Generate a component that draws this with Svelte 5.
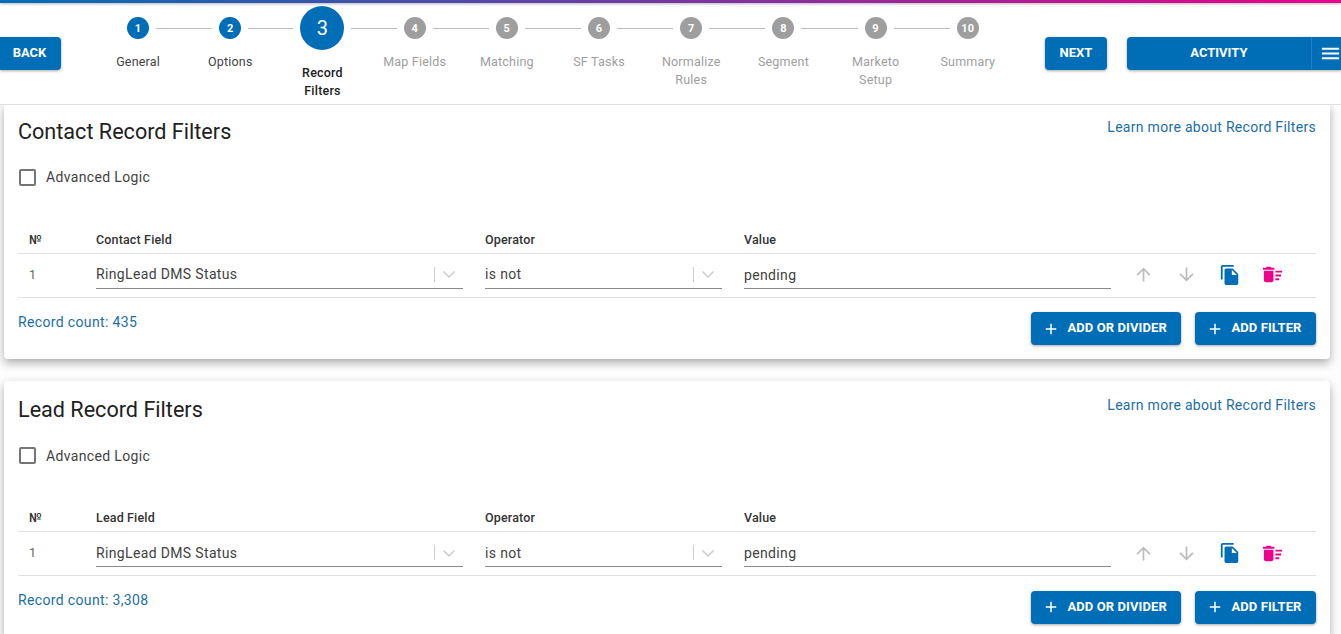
<script>
  const steps = [
    { n: 1, label: 'General', done: true },
    { n: 2, label: 'Options', done: true },
    { n: 3, label: 'Record Filters', current: true },
    { n: 4, label: 'Map Fields' },
    { n: 5, label: 'Matching' },
    { n: 6, label: 'SF Tasks' },
    { n: 7, label: 'Normalize Rules' },
    { n: 8, label: 'Segment' },
    { n: 9, label: 'Marketo Setup' },
    { n: 10, label: 'Summary' }
  ];

  const cards = [
    { title: 'Contact Record Filters', field: 'Contact Field', count: '435' },
    { title: 'Lead Record Filters', field: 'Lead Field', count: '3,308' }
  ];
</script>

<div class="page">
  <header class="topbar">
    <div class="gradient"></div>
    <div class="bar">
      <button class="btn back">BACK</button>
      <ol class="stepper">
        {#each steps as step, i}
          <li class="step" class:active={step.done || step.current} class:current={step.current}>
            <div class="track">
              <span class="line" class:hide={i === 0}></span>
              <span class="dot">{step.n}</span>
              <span class="line" class:hide={i === steps.length - 1}></span>
            </div>
            <div class="label">{step.label}</div>
          </li>
        {/each}
      </ol>
      <button class="btn next">NEXT</button>
      <div class="btn activity">
        <span class="activity-label">ACTIVITY</span>
        <span class="menu">
          <svg viewBox="0 0 24 24" width="23" height="23"><path d="M3 18h18v-2H3v2zm0-5h18v-2H3v2zm0-7v2h18V6H3z" /></svg>
        </span>
      </div>
    </div>
  </header>

  <main class="content">
    {#each cards as card}
      <section class="card">
        <div class="card-head">
          <h2>{card.title}</h2>
          <span class="link">Learn more about Record Filters</span>
        </div>
        <label class="check">
          <span class="box"></span>
          <span>Advanced Logic</span>
        </label>

        <div class="row head">
          <div class="num">№</div>
          <div>{card.field}</div>
          <div>Operator</div>
          <div>Value</div>
          <div></div>
        </div>
        <div class="row body">
          <div class="num">1</div>
          <div class="select">
            <span class="val">RingLead DMS Status</span>
            <span class="sep"></span>
            <svg class="chev" viewBox="0 0 20 20" width="20" height="20"><path d="M4.5 7.5 10 13l5.5-5.5" fill="none" stroke="#ccc" stroke-width="1.5" /></svg>
          </div>
          <div class="select">
            <span class="val">is not</span>
            <span class="sep"></span>
            <svg class="chev" viewBox="0 0 20 20" width="20" height="20"><path d="M4.5 7.5 10 13l5.5-5.5" fill="none" stroke="#ccc" stroke-width="1.5" /></svg>
          </div>
          <div class="select input"><span class="val">pending</span></div>
          <div class="actions">
            <svg viewBox="0 0 24 24" width="21" height="21" fill="#bdbdbd"><path d="M4 12l1.41 1.41L11 7.83V20h2V7.83l5.58 5.59L20 12l-8-8-8 8z" /></svg>
            <svg viewBox="0 0 24 24" width="21" height="21" fill="#bdbdbd"><path d="M20 12l-1.41-1.41L13 16.17V4h-2v12.17l-5.58-5.59L4 12l8 8 8-8z" /></svg>
            <svg viewBox="0 0 24 24" width="22" height="22" fill="#006eb7"><path d="M16 1H4c-1.1 0-2 .9-2 2v14h2V3h12V1zm-1 4l6 6v10c0 1.1-.9 2-2 2H7.99C6.89 23 6 22.1 6 21l.01-14c0-1.1.89-2 1.99-2h7zm-1 7h5.5L14 6.5V12z" /></svg>
            <svg viewBox="0 0 24 24" width="23" height="23" fill="#ec008c"><path d="M15 16h4v2h-4zm0-8h7v2h-7zm0 4h6v2h-6zM3 18c0 1.1.9 2 2 2h6c1.1 0 2-.9 2-2V8H3v10zM14 5h-3l-1-1H6L5 5H2v2h12z" /></svg>
          </div>
        </div>

        <div class="card-foot">
          <span class="link count">Record count: {card.count}</span>
          <div class="foot-btns">
            <button class="btn add">
              <svg viewBox="0 0 24 24" width="18" height="18" fill="#fff"><path d="M19 13h-6v6h-2v-6H5v-2h6V5h2v6h6v2z" /></svg>
              ADD OR DIVIDER
            </button>
            <button class="btn add">
              <svg viewBox="0 0 24 24" width="18" height="18" fill="#fff"><path d="M19 13h-6v6h-2v-6H5v-2h6V5h2v6h6v2z" /></svg>
              ADD FILTER
            </button>
          </div>
        </div>
      </section>
    {/each}
  </main>
</div>

<style>
  :global(body) {
    margin: 0;
    overflow: hidden;
    background: #fdfdfd;
    font-family: Roboto, 'Liberation Sans', sans-serif;
  }

  .page {
    height: 634px;
    overflow: hidden;
  }

  .topbar {
    position: relative;
    z-index: 2;
    height: 105px;
    box-sizing: border-box;
    background: #fff;
    border-bottom: 1px solid #dedede;
  }

  .gradient {
    height: 3px;
    background: linear-gradient(90deg, #006eb7, #ec008c);
    box-shadow: 0 1px 3px rgba(0, 0, 0, 0.3);
  }

  .bar {
    display: flex;
    align-items: flex-start;
  }

  .btn {
    box-sizing: border-box;
    border: 0;
    border-radius: 4px;
    background: #006eb7;
    color: #fff;
    font-family: Roboto, sans-serif;
    font-size: 13px;
    font-weight: 700;
    box-shadow: 0 1px 3px rgba(0, 0, 0, 0.35);
    padding: 0 0 2px;
  }

  .back {
    width: 61px;
    height: 33px;
    margin-top: 34px;
    border-radius: 0 4px 4px 0;
    padding-right: 2px;
  }

  .stepper {
    display: flex;
    list-style: none;
    margin: 3px 0 0 31px;
    padding: 0;
  }

  .step {
    width: 92.2px;
    color: #9e9e9e;
    font-size: 12.5px;
    letter-spacing: 0.2px;
  }

  .track {
    display: flex;
    align-items: center;
    height: 44px;
  }

  .line {
    flex: 1;
    height: 1px;
    background: #bdbdbd;
  }

  .line.hide {
    visibility: hidden;
  }

  .dot {
    flex: none;
    width: 22px;
    height: 22px;
    margin: 0 7px;
    border-radius: 50%;
    background: #9e9e9e;
    color: #fff;
    font-size: 11px;
    font-weight: 700;
    display: flex;
    align-items: center;
    justify-content: center;
  }

  .step.active .dot {
    background: #006eb7;
  }

  .step.active {
    color: #424242;
  }

  .step.current {
    color: #212121;
    font-weight: 500;
  }

  .step.current .dot {
    width: 44px;
    height: 44px;
    font-size: 20px;
    font-weight: 400;
  }

  .label {
    margin: 3px auto 0;
    padding: 0 14px;
    line-height: 18px;
    text-align: center;
  }

  .step.current .label {
    margin-top: 14px;
  }

  .next {
    width: 62px;
    height: 33px;
    margin: 34px 0 0 31px;
  }

  .activity {
    display: flex;
    align-items: center;
    width: 214px;
    height: 33px;
    margin: 34px 0 0 20px;
    border-radius: 4px 0 0 4px;
    padding: 0;
  }

  .activity-label {
    flex: 1;
    text-align: center;
    padding-bottom: 2px;
  }

  .menu {
    flex: none;
    display: flex;
    align-items: center;
    width: 30px;
    height: 33px;
    box-sizing: border-box;
    padding-left: 7px;
    border-left: 1px solid #1b80c4;
  }

  .menu svg {
    flex: none;
    fill: #fff;
  }

  .content {
    margin: -2px 11px 0 4px;
    display: flex;
    flex-direction: column;
    gap: 22.3px;
  }

  .card {
    box-sizing: border-box;
    height: 256px;
    flex: none;
    padding: 0 14px;
    background: #fff;
    border-radius: 4px;
    box-shadow: 0 4px 10px rgba(0, 0, 0, 0.32);
  }

  .card-head {
    display: flex;
    justify-content: space-between;
    padding-top: 15px;
  }

  h2 {
    margin: 0;
    font-size: 21.6px;
    font-weight: 400;
    line-height: 27px;
    color: #212121;
  }

  .link {
    color: #1a6ea8;
    font-size: 14px;
    letter-spacing: 0.3px;
    line-height: 19px;
  }

  .check {
    display: flex;
    align-items: center;
    gap: 10.5px;
    margin-top: 20.3px;
    height: 24px;
    color: #424242;
    font-size: 14px;
    letter-spacing: 0.35px;
  }

  .box {
    box-sizing: border-box;
    width: 16.5px;
    height: 16.5px;
    margin-left: 1px;
    border: 2px solid #757575;
    border-radius: 2px;
  }

  .row {
    display: grid;
    grid-template-columns: 78px 389px 259px 367px 1fr;
  }

  .row > :nth-child(2) {
    width: 367px;
  }

  .row > :nth-child(3) {
    width: 237px;
  }

  .head {
    margin-top: 35.7px;
    height: 27px;
    padding-top: 1px;
    align-items: center;
    border-bottom: 1px solid #e0e0e0;
    font-size: 12.5px;
    font-weight: 500;
    letter-spacing: 0.15px;
    color: #333;
  }

  .num {
    padding-left: 11px;
  }

  .body {
    height: 43px;
    align-items: start;
    border-bottom: 1px solid #e0e0e0;
    font-size: 14px;
    letter-spacing: 0.35px;
    color: #424242;
  }

  .body .num {
    font-size: 12.5px;
    line-height: 42px;
    color: #5f6b55;
  }

  .select {
    box-sizing: border-box;
    display: flex;
    align-items: center;
    height: 35px;
    padding-top: 6.5px;
    border-bottom: 1px solid #8a8a8a;
  }

  .select.input {
    padding-top: 7.5px;
  }

  .val {
    flex: 1;
  }

  .sep {
    width: 1px;
    height: 15px;
    background: #ccc;
  }

  .chev {
    margin: 0 4px;
  }

  .actions {
    display: grid;
    grid-template-columns: repeat(4, 43px);
    padding: 9px 0 0 11px;
    justify-items: center;
    align-items: center;
    height: 24px;
  }

  .card-foot {
    display: flex;
    justify-content: space-between;
    align-items: flex-start;
  }

  .count {
    margin-top: 15px;
    letter-spacing: 0.35px;
  }

  .foot-btns {
    display: flex;
    gap: 14px;
    margin-top: 14.3px;
  }

  .add {
    display: flex;
    align-items: center;
    gap: 7px;
    height: 33px;
    padding: 0 14.5px 2px 11px;
    letter-spacing: 0.1px;
  }

  .add svg {
    margin-top: 2px;
  }
</style>
